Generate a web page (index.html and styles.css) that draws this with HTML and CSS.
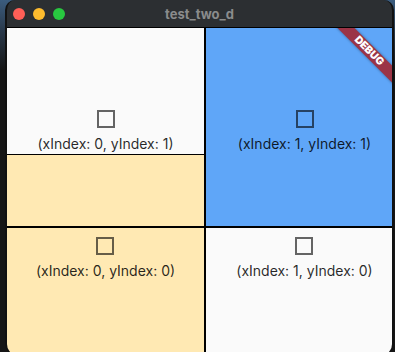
FILE: index.html
```html
<!DOCTYPE html>
<html lang="en">
<head>
  <meta charset="utf-8">
  <link rel="stylesheet" href="styles.css">
</head>
<body>

<div class="window">
  <div class="titlebar">
    <div class="lights">
      <span class="light red"></span>
      <span class="light amber"></span>
      <span class="light green"></span>
    </div>
    <div class="title">test_two_d</div>
    <div></div>
  </div>

  <div class="grid">
    <div class="cell split">
      <div class="part white top">
        <div class="item">
          <svg class="box" viewBox="0 0 24 24"><rect x="4" y="4" width="16" height="16" /></svg>
          <div class="label">(xIndex: 0, yIndex: 1)</div>
        </div>
      </div>
      <div class="part yellow fill"></div>
    </div>

    <div class="cell blue top">
      <div class="item">
        <svg class="box" viewBox="0 0 24 24"><rect x="4" y="4" width="16" height="16" /></svg>
        <div class="label">(xIndex: 1, yIndex: 1)</div>
      </div>
    </div>

    <div class="cell yellow bottom">
      <div class="item">
        <svg class="box" viewBox="0 0 24 24"><rect x="4" y="4" width="16" height="16" /></svg>
        <div class="label">(xIndex: 0, yIndex: 0)</div>
      </div>
    </div>

    <div class="cell white bottom">
      <div class="item">
        <svg class="box" viewBox="0 0 24 24"><rect x="4" y="4" width="16" height="16" /></svg>
        <div class="label">(xIndex: 1, yIndex: 0)</div>
      </div>
    </div>

    <div class="banner">DEBUG</div>
  </div>
</div>

</body>
</html>
```

FILE: styles.css
```css
body {
  margin: 0;
  height: 352px;
  overflow: hidden;
  background: linear-gradient(#3b5c7e 0, #2a3a4c 30px, #161616 70px);
  font-family: Inter, "Noto Sans", sans-serif;
  }

.window {
  margin-left: 5px;
  width: 385px;
  height: 354px;
  border-left: 2px solid #111;
  border-right: 2px solid #111;
  border-radius: 10px;
  overflow: hidden;
  background-color: #2c2f32;
  }

.titlebar {
  height: 27px;
  border-bottom: 1px solid #000;
  display: grid;
  grid-template-columns: 1fr auto 1fr;
  align-items: center;
  }

.lights {
  display: flex;
  gap: 8px;
  padding-left: 6px;
  }

.light {
  width: 12px;
  height: 12px;
  border-radius: 50%;
  }

.red   { background-color: #ff5f57; }
.amber { background-color: #febc2e; }
.green { background-color: #28c840; }

.title {
  color: #8a8b8c;
  font-size: 13px;
  font-weight: 700;
  }

.grid {
  position: relative;
  height: 326px;
  overflow: hidden;
  display: grid;
  grid-template-columns: 197px 197px;
  grid-template-rows: 198px 198px;
  gap: 2px;
  background-color: #000;
  }

.cell {
  display: flex;
  flex-direction: column;
  align-items: center;
  }

.split {
  align-items: stretch;
  }

.part {
  display: flex;
  flex-direction: column;
  align-items: center;
  }

.white  { background-color: #fafafa; }
.yellow { background-color: #ffe9b3; }
.blue   { background-color: #5fa6f8; }

.top {
  padding-top: 79px;
  }

.split .top {
  box-sizing: border-box;
  height: 127px;
  border-bottom: 1px solid #000;
  }

.fill {
  flex: 1;
  }

.bottom {
  padding-top: 6px;
  }

.item {
  display: flex;
  flex-direction: column;
  align-items: center;
  gap: 4px;
  }

.box {
  width: 24px;
  height: 24px;
  }

.box rect {
  fill: none;
  stroke: rgba(0, 0, 0, 0.6);
  stroke-width: 2;
  }

.label {
  font-size: 14px;
  line-height: 17px;
  color: rgba(0, 0, 0, 0.85);
  white-space: nowrap;
  }

.banner {
  position: absolute;
  left: 312px;
  top: 17px;
  width: 100px;
  height: 12px;
  transform: rotate(45deg);
  background-color: #9b3446;
  box-shadow: 0 0 3px rgba(0, 0, 0, 0.4);
  color: #fff;
  font-size: 10.5px;
  font-weight: 900;
  line-height: 12px;
  text-align: center;
  }
```
